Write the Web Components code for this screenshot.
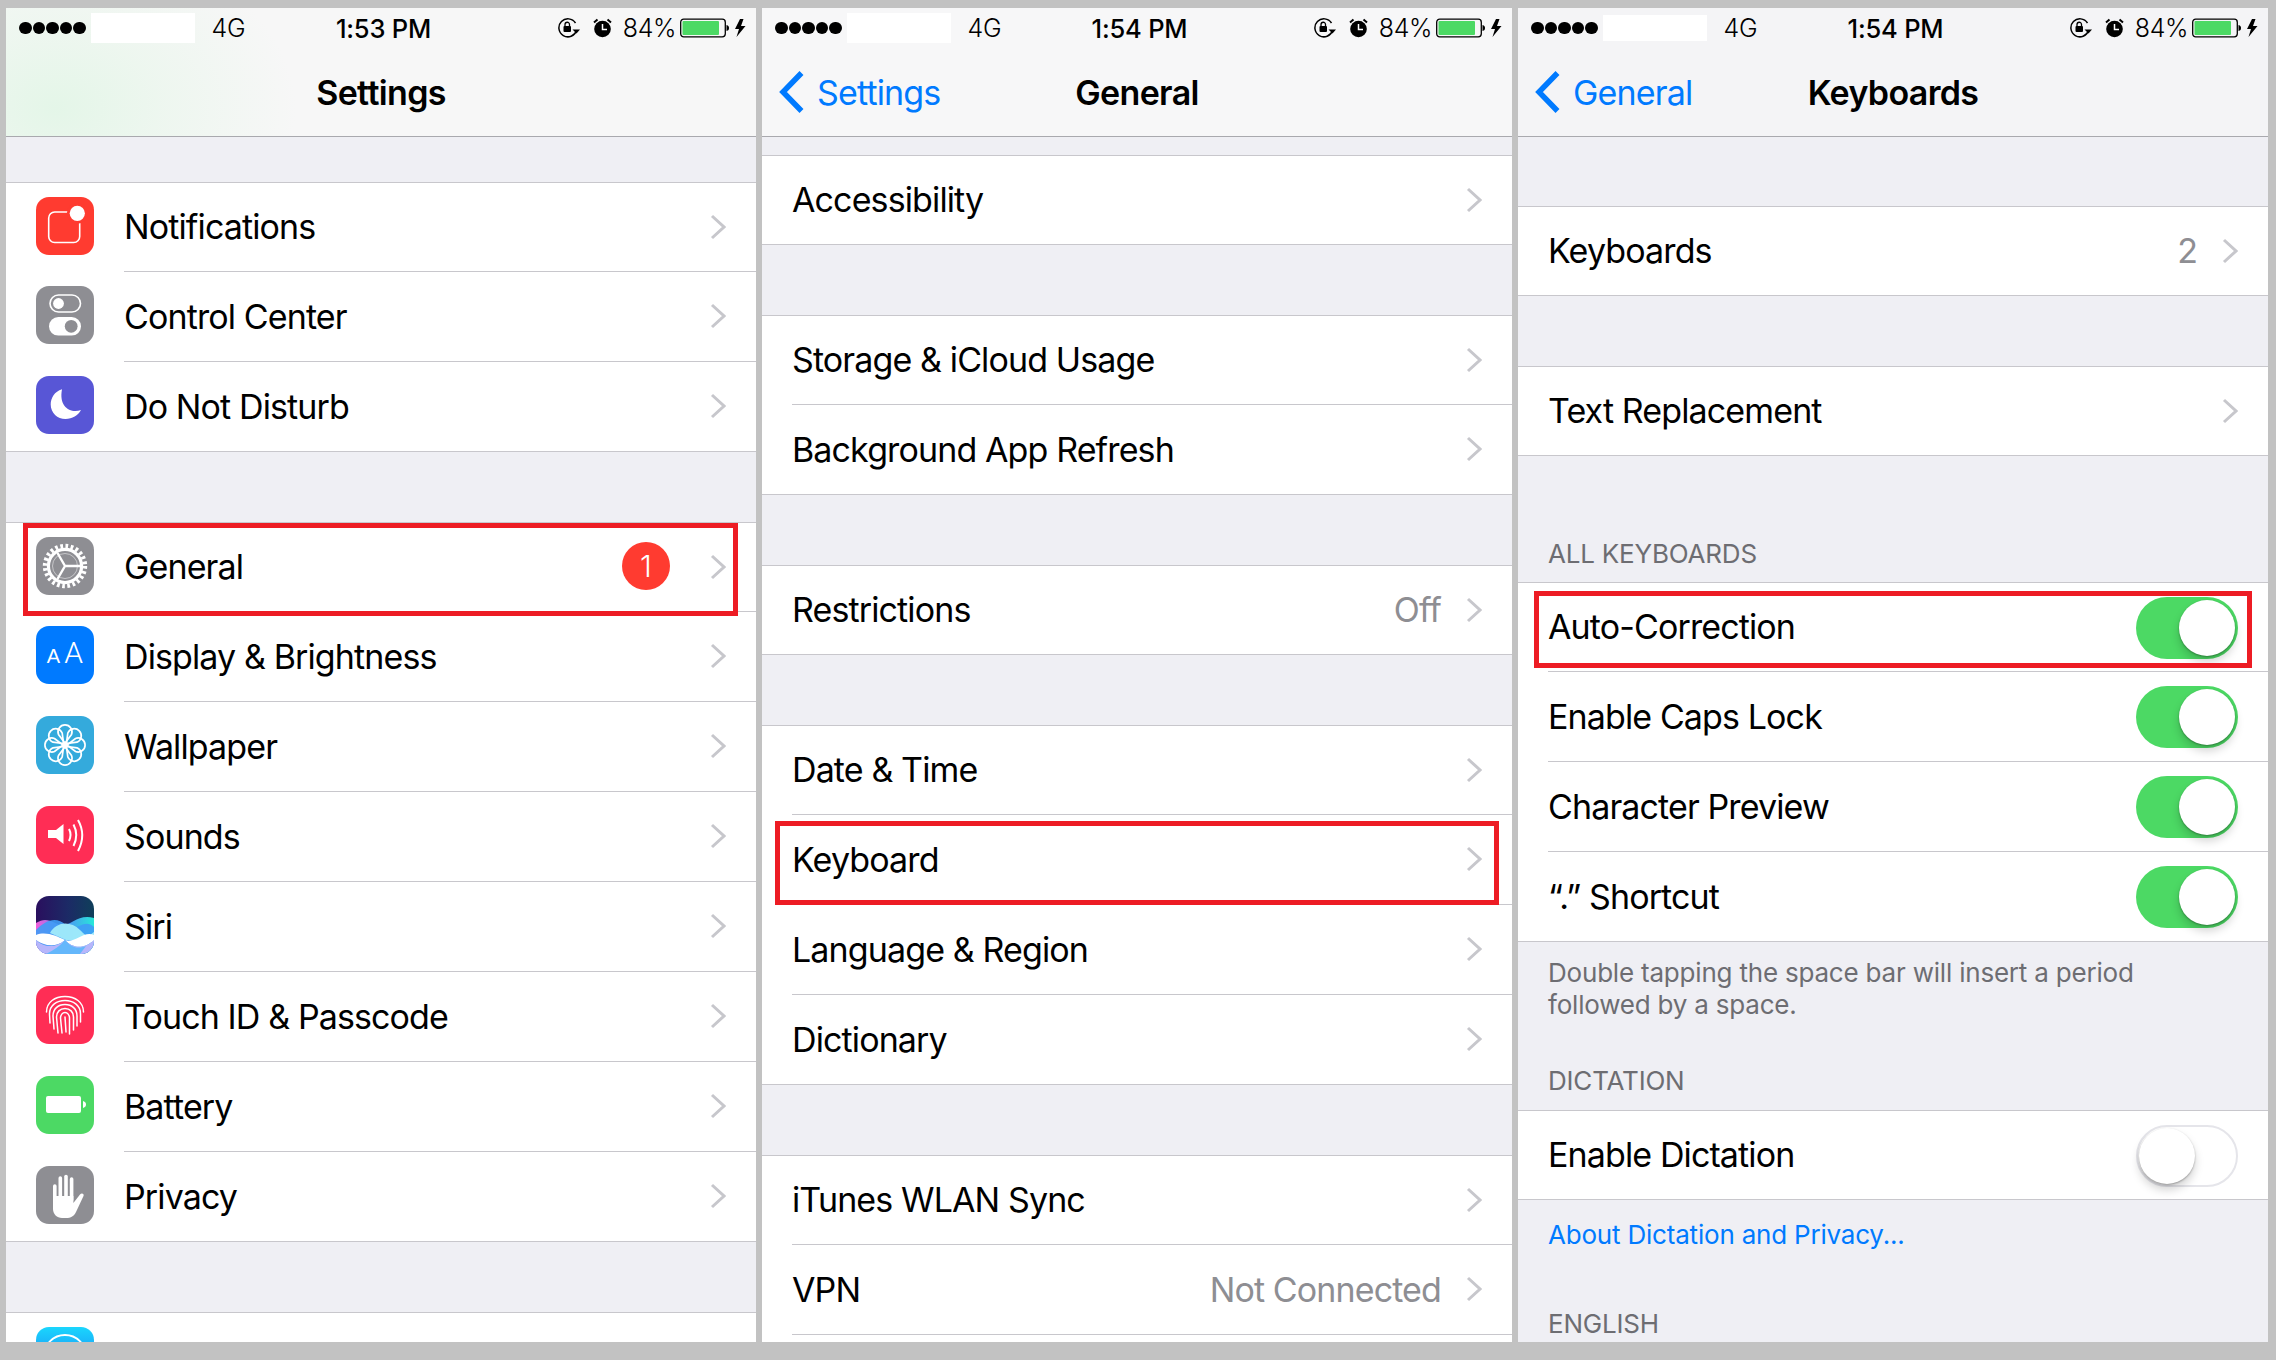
<!DOCTYPE html>
<html><head><meta charset="utf-8"><title>iOS Settings</title>
<style>
html,body{margin:0;height:100%;overflow:hidden;background:#c2c2c2}
body{font-family:Inter,Roboto,"Liberation Sans",sans-serif}
.screens{display:flex;gap:6px;padding:8px 8px 18px 6px;box-sizing:border-box;height:1360px}
</style></head><body>
<div class="screens">
<ios-screen time="1:53 PM" title="Settings" box="30" tint>
  <ios-gap h="45"></ios-gap>
  <ios-section>
    <ios-row label="Notifications" icon="notifications" inset="118" chevron></ios-row>
    <ios-row label="Control Center" icon="control" inset="118" chevron></ios-row>
    <ios-row label="Do Not Disturb" icon="moon" inset="118" chevron></ios-row>
  </ios-section>
  <ios-gap h="70"></ios-gap>
  <ios-section>
    <ios-row label="General" icon="gear" inset="118" chevron badge="1" hl="0 18 -4 17"></ios-row>
    <ios-row label="Display &amp; Brightness" icon="display" inset="118" chevron></ios-row>
    <ios-row label="Wallpaper" icon="wallpaper" inset="118" chevron></ios-row>
    <ios-row label="Sounds" icon="sounds" inset="118" chevron></ios-row>
    <ios-row label="Siri" icon="siri" inset="118" chevron></ios-row>
    <ios-row label="Touch ID &amp; Passcode" icon="touch" inset="118" chevron></ios-row>
    <ios-row label="Battery" icon="battery" inset="118" chevron></ios-row>
    <ios-row label="Privacy" icon="privacy" inset="118" chevron></ios-row>
  </ios-section>
  <ios-gap h="70"></ios-gap>
  <ios-section>
    <ios-row icon="store" inset="118"></ios-row>
  </ios-section>
</ios-screen>
<ios-screen time="1:54 PM" title="General" back="Settings" box="30">
  <ios-gap h="18"></ios-gap>
  <ios-section><ios-row label="Accessibility" inset="30" chevron></ios-row></ios-section>
  <ios-gap h="70"></ios-gap>
  <ios-section>
    <ios-row label="Storage &amp; iCloud Usage" inset="30" chevron></ios-row>
    <ios-row label="Background App Refresh" inset="30" chevron></ios-row>
  </ios-section>
  <ios-gap h="70"></ios-gap>
  <ios-section><ios-row label="Restrictions" value="Off" inset="30" chevron></ios-row></ios-section>
  <ios-gap h="70"></ios-gap>
  <ios-section>
    <ios-row label="Date &amp; Time" inset="30" chevron></ios-row>
    <ios-row label="Keyboard" inset="30" chevron hl="6 13 0 13"></ios-row>
    <ios-row label="Language &amp; Region" inset="30" chevron></ios-row>
    <ios-row label="Dictionary" inset="30" chevron></ios-row>
  </ios-section>
  <ios-gap h="70"></ios-gap>
  <ios-section>
    <ios-row label="iTunes WLAN Sync" inset="30" chevron></ios-row>
    <ios-row label="VPN" value="Not Connected" inset="30" chevron></ios-row>
    <ios-row inset="30"></ios-row>
  </ios-section>
</ios-screen>
<ios-screen time="1:54 PM" title="Keyboards" back="General" box="26">
  <ios-gap h="69"></ios-gap>
  <ios-section><ios-row label="Keyboards" value="2" inset="30" chevron></ios-row></ios-section>
  <ios-gap h="70"></ios-gap>
  <ios-section><ios-row label="Text Replacement" inset="30" chevron></ios-row></ios-section>
  <ios-caption h="126" pad="82">ALL KEYBOARDS</ios-caption>
  <ios-section>
    <ios-row label="Auto-Correction" inset="30" toggle="on" hl="8 16 4 16"></ios-row>
    <ios-row label="Enable Caps Lock" inset="30" toggle="on"></ios-row>
    <ios-row label="Character Preview" inset="30" toggle="on"></ios-row>
    <ios-row label="“.” Shortcut" inset="30" toggle="on"></ios-row>
  </ios-section>
  <ios-caption h="168" pad="15" foot>
    Double tapping the space bar will insert a period<br>followed by a space.
    <div style="height:44px"></div>
    DICTATION
  </ios-caption>
  <ios-section><ios-row label="Enable Dictation" inset="30" toggle="off"></ios-row></ios-section>
  <ios-caption h="140" pad="19" foot>
    <span style="color:#007aff">About Dictation and Privacy...</span>
    <div style="height:57px"></div>
    ENGLISH
  </ios-caption>
</ios-screen>
</div>
<script>
const ICONS={
notifications:`<rect width="58" height="58" rx="13" fill="#ff3b30"/><rect x="12.7" y="15" width="31" height="30.5" rx="6" fill="none" stroke="#fff" stroke-width="1.6"/><circle cx="41.3" cy="16.3" r="10.5" fill="#ff3b30"/><circle cx="41.3" cy="16.3" r="7.6" fill="#fff"/>`,
control:`<rect width="58" height="58" rx="13" fill="#8e8e93"/><rect x="14" y="9" width="30.5" height="17" rx="8.5" fill="none" stroke="#fff" stroke-width="1.6"/><circle cx="22.5" cy="17.5" r="5.4" fill="#fff"/><rect x="13" y="31" width="32" height="18.6" rx="9.3" fill="#fff"/><circle cx="35.2" cy="40.3" r="6.4" fill="#8e8e93"/>`,
moon:`<rect width="58" height="58" rx="13" fill="#5856d6"/><path d="M26 13.3C18.5 15.6 14.7 22 14.7 28.5 14.7 37 21.5 43 29.5 43 36.3 43 42 39.3 45 34 35 37.7 22.5 31.5 26 13.3Z" fill="#fff"/>`,
gear:`<rect width="58" height="58" rx="13" fill="#8e8e93"/><circle cx="29" cy="29" r="20" fill="none" stroke="#fff" stroke-width="4.4" stroke-dasharray="2.7 2.53"/><circle cx="29" cy="29" r="16.6" fill="none" stroke="#fff" stroke-width="3.2"/><circle cx="29" cy="29" r="12.5" fill="none" stroke="#fff" stroke-width=".7" opacity=".7"/><path d="M29 29 21.5 16M29 29H45M29 29 21.5 42" stroke="#fff" stroke-width="2.4" fill="none"/>`,
display:`<rect width="58" height="58" rx="13" fill="#007aff"/><text x="17.3" y="37.3" text-anchor="middle" font-family="Liberation Sans,sans-serif" font-size="20" fill="#fff">A</text><text x="37.5" y="37.3" text-anchor="middle" font-family="Roboto,sans-serif" font-weight="300" font-size="30" fill="#fff">A</text>`,
wallpaper:`<rect width="58" height="58" rx="13" fill="#34aadc"/><g fill="none" stroke="#fff" stroke-width="1.7">${[0,45,90,135,180,225,270,315].map(a=>`<g transform="rotate(${a} 29 29)"><path d="M22.5 18.500A7 7 0 1 1 35.500 18.500L29 27Z"/></g>`).join('')}</g><circle cx="29" cy="29" r="3" fill="#fff"/>`,
sounds:`<rect width="58" height="58" rx="13" fill="#ff2d55"/><path d="M12 24H20L27.5 18V38L20 32H12Z" fill="#fff"/><g fill="none" stroke="#fff" stroke-width="2"><path d="M33 23Q36 28.500 33 35"/><path d="M37.500 18.500Q43 29 37.500 40"/><path d="M42 14Q50.500 29 42 45"/></g>`,
siri:`<defs><linearGradient id="sb" x1="0" y1="0" x2="1" y2="0"><stop offset="0" stop-color="#2a0f5e"/><stop offset=".55" stop-color="#1c2a66"/><stop offset="1" stop-color="#0f3f5a"/></linearGradient><linearGradient id="sw" x1="0" y1="0" x2="1" y2="0"><stop offset="0" stop-color="#f45bd9"/><stop offset=".5" stop-color="#4f8ff7"/><stop offset="1" stop-color="#27e8d8"/></linearGradient><clipPath id="sc"><rect width="58" height="58" rx="13"/></clipPath></defs><g clip-path="url(#sc)"><rect width="58" height="58" fill="url(#sb)"/><path d="M0 27C12 19 18 29 27 29S42 18 58 22V58H0Z" fill="url(#sw)"/><path d="M0 34C10 24 20 20 30 29S48 21 58 31V58H0Z" fill="#3f9cf6" opacity=".9"/><path d="M14 37C20 26 34 24 44 34S52 40 58 36V46L30 44Z" fill="#a6effb" opacity=".9"/><path d="M0 39C10 35 20 40 29 44S48 34 58 39V44C50 52 38 54 29 44 20 52 8 50 0 44Z" fill="#fff"/><path d="M0 44C8 52 20 52 29 44 38 54 50 52 58 44V58H0Z" fill="#b7b6fb"/><path d="M10 58C18 54 24 50 29 44 34 50 40 54 50 50L44 58Z" fill="#4fb8fb" opacity=".8"/></g>`,
touch:`<rect width="58" height="58" rx="13" fill="#ff2d55"/><g fill="none" stroke="#fff" stroke-width="1.5" stroke-linecap="round"><path d="M10.500 26C10.500 16 19 10.500 29 10.500S47.500 16 47.500 26"/><path d="M14 37 13.500 28C13.500 19 21 14.500 29 14.500S44.500 19 44.500 28V36"/><path d="M18 43 17 30C17 23 22 18.500 29 18.500S41 23 41 30V40"/><path d="M22 47 20.500 31C20.500 26 24 22.500 29 22.500S37.500 26 37.500 31V44"/><path d="M26 47 24.500 32C24.500 29 26.500 26.500 29 26.500S33.500 29 33.500 32V48"/><path d="M29 31 30 46"/></g>`,
battery:`<rect width="58" height="58" rx="13" fill="#4cd964"/><rect x="10" y="20" width="35" height="17" rx="2" fill="#fff"/><path d="M47 25C49.500 26 50 27 50 28.500S49.500 31 47 32Z" fill="#fff"/>`,
privacy:`<rect width="58" height="58" rx="13" fill="#8e8e93"/><g stroke="#fff" stroke-width="3.6" stroke-linecap="round"><path d="M18.800 20V36"/><path d="M24.300 12V32"/><path d="M30 10.500V32"/><path d="M35.600 13V34"/></g><path d="M17 30H37.400V37L44 28.500C45.500 26.500 48.500 27.500 47.500 30L40 46C38 50 35 52 30 52H26C21 52 17 48 17 43Z" fill="#fff"/>`,
store:`<defs><linearGradient id="st" x1="0" y1="0" x2="0" y2="1"><stop offset="0" stop-color="#1ad6fd"/><stop offset="1" stop-color="#1d62f0"/></linearGradient></defs><rect width="58" height="58" rx="13" fill="url(#st)"/><circle cx="29" cy="29" r="21" fill="none" stroke="#fff" stroke-width="1.800"/><path d="M29 15V20" stroke="#fff" stroke-width="2"/>`
};
const def=(n,html)=>customElements.define(n,class extends HTMLElement{
  connectedCallback(){ if(this.shadowRoot) return; const s=this.attachShadow({mode:'open'}); s.innerHTML=typeof html==='function'?html(this):html; }
});
def('ios-gap',e=>`<style>:host{display:block;height:${e.getAttribute('h')}px;flex:none}</style>`);
def('ios-section',`<style>:host{display:block;background:#fff;border-top:1px solid #c8c7cc;flex:none}</style><slot></slot>`);
def('ios-caption',e=>`<style>:host{display:block;box-sizing:border-box;height:${e.getAttribute('h')}px;padding:${e.getAttribute('pad')}px 30px 0;font-size:26px;line-height:32px;color:#6d6d72;flex:none;letter-spacing:-.2px;overflow:hidden}</style><slot></slot>`);
def('ios-icon',e=>`<style>:host{display:block;width:58px;height:58px;flex:none}svg{display:block}</style><svg width="58" height="58" viewBox="0 0 58 58">${ICONS[e.getAttribute('name')]||''}</svg>`);
def('ios-switch',e=>{const on=e.getAttribute('state')==='on';return `<style>
:host{display:block;position:relative;width:102px;height:62px;box-sizing:border-box;border-radius:31px;flex:none;margin:4px 0 0;background:${on?'#4cd964':'#fff'};${on?'':'border:2px solid #e5e5ea;'}}
i{position:absolute;display:block;width:56px;height:56px;border-radius:50%;background:#fff;${on?'left:43px;top:3px':'left:1px;top:1px'};box-shadow:0 6px 10px rgba(0,0,0,.18),0 1px 2px rgba(0,0,0,.3)}
</style><i></i>`});
def('ios-row',e=>{
  const a=n=>e.getAttribute(n), inset=a('inset')||0, hl=a('hl');
  let hlBox='';
  if(hl){const [t,r,b,l]=hl.split(' ');hlBox=`<div class="hl" style="top:${t}px;right:${r}px;bottom:${b}px;left:${l}px"></div>`;}
  return `<style>
:host{display:flex;align-items:center;position:relative;height:90px;box-sizing:border-box;padding:0 30px 4px;font-size:34px;color:#000}
:host(:first-child){height:89px}
:host::after{content:"";position:absolute;left:${inset}px;right:0;bottom:0;height:1px;background:#c8c7cc}
:host(:last-child)::after{left:0}
ios-icon{margin-right:30px}
.label{flex:1;white-space:nowrap;letter-spacing:-.88px;margin-top:2px}
.value{color:#8e8e93;margin:2px 25px 0 0;white-space:nowrap;letter-spacing:-.88px}
.badge{width:48px;height:48px;border-radius:50%;background:#ff3b30;color:#fff;font-size:30px;font-weight:300;display:flex;align-items:center;justify-content:center;margin-right:40px}
svg.ch{flex:none;display:block;margin-top:2px}
.hl{position:absolute;border:5px solid #ed1c24;z-index:5;box-sizing:border-box}
</style>
${a('icon')?`<ios-icon name="${a('icon')}"></ios-icon>`:''}
<span class="label">${a('label')||''}</span>
${a('value')?`<span class="value">${a('value')}</span>`:''}
${a('badge')?`<span class="badge">${a('badge')}</span>`:''}
${a('toggle')?`<ios-switch state="${a('toggle')}"></ios-switch>`:''}
${e.hasAttribute('chevron')?`<svg class="ch" width="16" height="26" viewBox="0 0 16 26"><path d="M2 2 14 13 2 24" fill="none" stroke="#c7c7cc" stroke-width="3"/></svg>`:''}
${hlBox}`;
});
def('ios-status',e=>`<style>
:host{display:grid;grid-template-columns:1fr auto 1fr;align-items:center;height:40px;font-size:25px;color:#000;flex:none}
.l{display:flex;align-items:center;padding-left:13px}
.dots{display:flex;gap:1px}.dots i{width:12.500px;height:12.500px;border-radius:50%;background:#000;display:block}
.box{width:104px;height:${e.getAttribute('box')}px;background:#fff;margin:0 17px 0 5px}
.net{font-weight:300;letter-spacing:-.3px}
.t{font-weight:500;letter-spacing:-.2px;font-size:25.500px;padding-left:5px}
.r{display:flex;align-items:center;justify-content:flex-end;padding-right:10px}
.p{font-weight:300;margin:0 4px 0 11px;letter-spacing:-.4px}
svg{display:block}
</style>
<div class="l"><div class="dots"><i></i><i></i><i></i><i></i><i></i></div><div class="box"></div><span class="net">4G</span></div>
<div class="t">${e.getAttribute('time')}</div>
<div class="r">
<svg width="23" height="20" viewBox="0 0 23 20" style="margin-right:13px"><path d="M19.500 12.500A9 9 0 1 1 18.500 5" fill="none" stroke="#000" stroke-width="1.500"/><path d="M15.500 11.500H23L19.500 15.500Z" fill="#000"/><rect x="6.500" y="8" width="7.500" height="6" rx="1" fill="#000"/><path d="M8 8.500V6.500A2.200 2.200 0 0 1 12.500 6.500V8.500" fill="none" stroke="#000" stroke-width="1.300"/></svg>
<svg width="19" height="20" viewBox="0 0 19 20"><circle cx="9.500" cy="11" r="8.300" fill="#000"/><path d="M9.500 6V11.500H14" fill="none" stroke="#fff" stroke-width="1.500"/><path d="M1 4.500 4.500 1.500M18 4.500 14.500 1.500" stroke="#000" stroke-width="2"/></svg>
<span class="p">84%</span>
<svg width="66" height="20" viewBox="0 0 66 20"><rect x=".7" y="1.200" width="44.600" height="17.600" rx="3" fill="none" stroke="#000" stroke-width="1.300"/><rect x="2.500" y="3" width="36.500" height="14" rx="1" fill="#4cd964"/><path d="M46.500 7C48.500 7.500 49 8.500 49 10S48.500 12.500 46.500 13Z" fill="#000"/><path d="M60 1 55 11H59L56.500 19 65.500 8H61L63.500 1Z" fill="#000"/></svg>
</div>`);
def('ios-nav',e=>{const b=e.getAttribute('back');return `<style>
:host{display:grid;grid-template-columns:1fr auto 1fr;align-items:center;height:89px;box-sizing:border-box;border-bottom:1px solid #a9a9ae;flex:none;font-size:34px;letter-spacing:-.85px}
.b{display:flex;align-items:center;color:#007aff;padding-left:17px}
.b svg{display:block;margin-right:13px}
.t{font-weight:600;color:#000;letter-spacing:-.65px}
</style>
<div class="b">${b?`<svg width="25" height="42" viewBox="0 0 25 42"><path d="M22.500 2 4 21 22.500 40" fill="none" stroke="#007aff" stroke-width="5.500"/></svg><span>${b}</span>`:''}</div>
<div class="t">${e.getAttribute('title')}</div><div></div>`});
def('ios-screen',e=>{const tint=e.hasAttribute('tint'),a=n=>e.getAttribute(n);return `<style>
:host{display:flex;flex-direction:column;width:750px;flex:none;height:1334px;overflow:hidden;background:#efeff4}
.top{flex:none;background:${tint?'radial-gradient(ellipse 240px 170px at 50px 100px,#e4f6e8 0,rgba(230,246,233,.55) 45%,rgba(230,246,233,0) 100%),#f7f7f7':(a('title')==='General'?'#f7f7f8':'#f4f4f6')}}
</style>
<div class="top"><ios-status time="${a('time')}" box="${a('box')}"></ios-status><ios-nav title="${a('title')}" ${a('back')?`back="${a('back')}"`:''}></ios-nav></div>
<slot></slot>`});
</script>
</body></html>
